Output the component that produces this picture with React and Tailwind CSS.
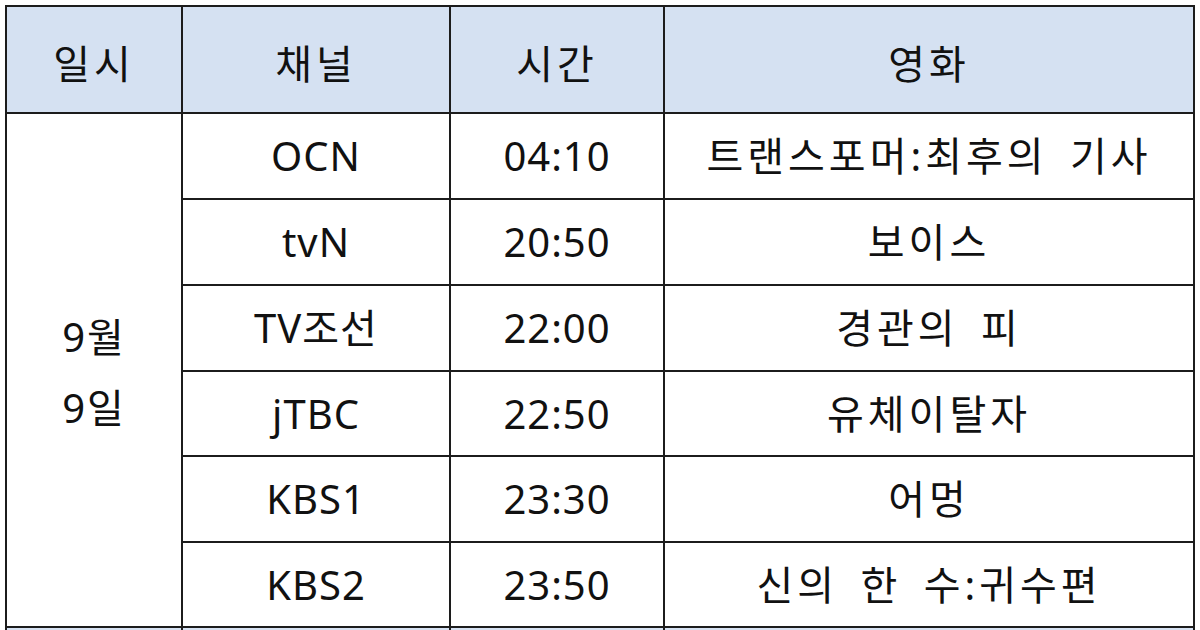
import React from "react";

const rows = [
  { ch: "OCN", time: "04:10", movie: "트랜스포머:최후의 기사", h: "h-[86px]" },
  { ch: "tvN", time: "20:50", movie: "보이스", h: "h-[86px]" },
  { ch: "TV조선", time: "22:00", movie: "경관의 피", h: "h-[86px]" },
  { ch: "jTBC", time: "22:50", movie: "유체이탈자", h: "h-[85px]" },
  { ch: "KBS1", time: "23:30", movie: "어멍", h: "h-[86px]" },
  { ch: "KBS2", time: "23:50", movie: "신의 한 수:귀수편", h: "h-[85px]" },
];

const cell = "border-2 border-[#1c1c1c] text-center align-middle p-0";

export default function App() {
  return (
    <div className="w-[1200px] h-[630px] overflow-hidden bg-white pl-[5px] pt-[5px]">
      <table
        className="table-fixed border-collapse w-[1188px] text-[40px] leading-none text-[#111] [word-spacing:0.2em]"
        style={{ fontFamily: '"Noto Sans", "Noto Sans CJK KR", sans-serif' }}
      >
        <colgroup>
          <col className="w-[176px]" />
          <col className="w-[268px]" />
          <col className="w-[214px]" />
          <col className="w-[530px]" />
        </colgroup>
        <thead>
          <tr className="h-[107px] bg-[#d5e1f2]">
            <th className={`${cell} font-normal pt-2 tracking-[4px]`}>일시</th>
            <th className={`${cell} font-normal pt-2 tracking-[4px]`}>채널</th>
            <th className={`${cell} font-normal pt-2 tracking-[4px]`}>시간</th>
            <th className={`${cell} font-normal pt-2 tracking-[4px]`}>영화</th>
          </tr>
        </thead>
        <tbody>
          {rows.map((r, i) => (
            <tr key={r.ch} className={r.h}>
              {i === 0 && (
                <td rowSpan={6} className={`${cell} leading-[71px] pt-1 tracking-[2px]`}>
                  9월
                  <br />
                  9일
                </td>
              )}
              <td className={`${cell} tracking-[1px]`}>{r.ch}</td>
              <td className={`${cell} tracking-[1px]`}>{r.time}</td>
              <td className={`${cell} tracking-[4px]`}>{r.movie}</td>
            </tr>
          ))}
          <tr className="h-[40px] bg-[#d5e1f2]">
            <td className={cell}></td>
            <td className={cell}></td>
            <td className={cell}></td>
            <td className={cell}></td>
          </tr>
        </tbody>
      </table>
    </div>
  );
}
